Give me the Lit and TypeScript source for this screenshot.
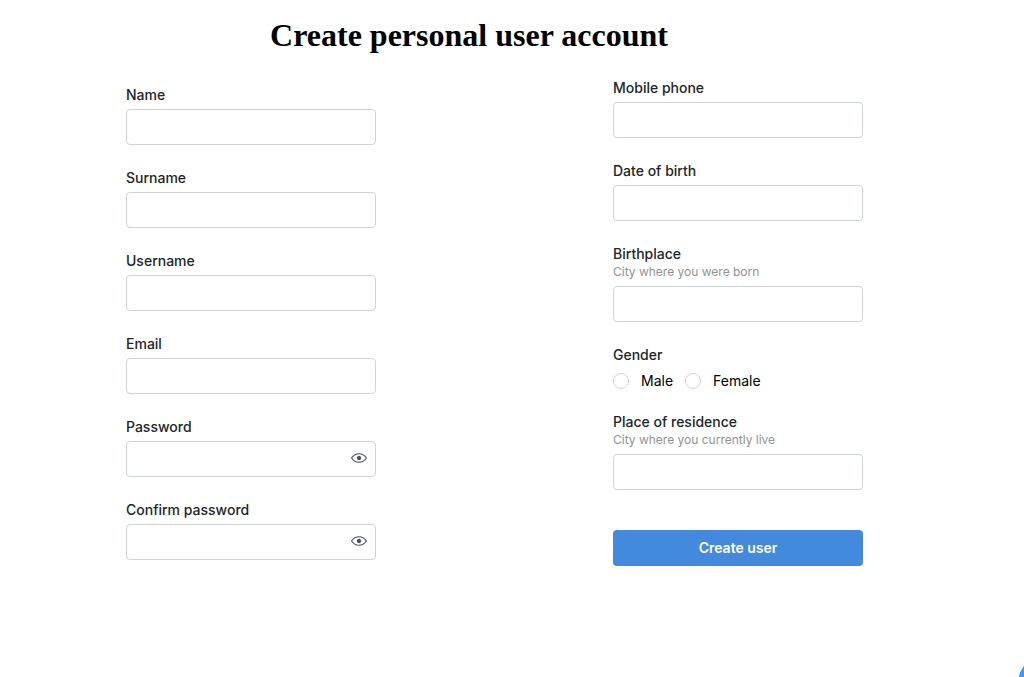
import { LitElement, html, css, svg, nothing } from "lit";
import { customElement, property, state } from "lit/decorators.js";

const eye = svg`<svg viewBox="0 0 15 15" width="16" height="16" aria-hidden="true">
  <path fill="currentColor" fill-rule="evenodd" clip-rule="evenodd" d="M7.5 11C4.8 11 2.54 9.62 1.1 7.5C2.54 5.38 4.8 4 7.5 4C10.2 4 12.46 5.38 13.9 7.5C12.46 9.62 10.2 11 7.5 11ZM7.5 3C4.31 3 1.65 4.71 .08 7.24C-.02 7.4-.02 7.6 .08 7.76C1.65 10.29 4.31 12 7.5 12C10.69 12 13.35 10.29 14.92 7.76C15.02 7.6 15.02 7.4 14.92 7.24C13.35 4.71 10.69 3 7.5 3ZM7.5 9.5C8.6 9.5 9.5 8.6 9.5 7.5C9.5 6.4 8.6 5.5 7.5 5.5C6.4 5.5 5.5 6.4 5.5 7.5C5.5 8.6 6.4 9.5 7.5 9.5Z"/>
</svg>`;

@customElement("form-field")
class FormField extends LitElement {
  @property() label = "";
  @property() name = "";
  @property() type = "text";
  @property() hint = "";
  @state() private revealed = false;

  static styles = css`
    :host { display: block; }
    .label { display: block; font-size: 14px; line-height: 20px; font-weight: 500; color: #212529; }
    .hint { margin: 0 0 6px; font-size: 12px; line-height: 16px; color: #909296; }
    .box {
      display: flex;
      align-items: center;
      box-sizing: border-box;
      height: 36px;
      margin-top: 4px;
      border: 1px solid #ced4da;
      border-radius: 4px;
      background: #fff;
    }
    .box:focus-within { border-color: #228be6; }
    .input {
      flex: 1;
      min-width: 0;
      align-self: stretch;
      padding: 0 12px;
      border: 0;
      outline: 0;
      background: none;
      font: inherit;
      font-size: 14px;
    }
    .toggle {
      display: grid;
      place-items: center;
      width: 26px;
      height: 28px;
      margin-right: 3px;
      padding: 0 0 2px;
      border: 0;
      background: none;
      color: #495057;
      cursor: pointer;
    }
  `;

  render() {
    const secret = this.type === "password";
    return html`
      <label class="label" for="input">${this.label}</label>
      ${this.hint ? html`<p class="hint" id="hint">${this.hint}</p>` : nothing}
      <div class="box">
        <input class="input" id="input" name=${this.name}
          type=${secret && this.revealed ? "text" : this.type}
          aria-describedby=${this.hint ? "hint" : nothing} />
        ${secret
          ? html`<button class="toggle" type="button" aria-label="Show password"
              @click=${() => (this.revealed = !this.revealed)}>${eye}</button>`
          : nothing}
      </div>
    `;
  }
}

@customElement("app-root")
class AppRoot extends LitElement {
  static styles = css`
    :host {
      display: block;
      min-height: 100vh;
      background: #fff;
      color: #000;
      font-family: Inter, "Liberation Sans", sans-serif;
    }
    .title {
      margin: 0;
      padding: 17px 86px 0 0;
      font: bold 32px/37px "Liberation Serif", serif;
      text-align: center;
    }
    .form {
      display: flex;
      flex-wrap: wrap;
      justify-content: space-between;
      padding: 24px 161px 40px 126px;
    }
    .column { display: flex; flex-direction: column; gap: 23px; width: 250px; }
    .first { padding-top: 7px; }
    .gender { margin: 0; padding: 0; border: 0; }
    .legend { padding: 0; font-size: 14px; line-height: 20px; font-weight: 500; color: #212529; }
    .options { display: flex; gap: 12px; margin-top: 8px; }
    .option { display: flex; align-items: center; gap: 12px; font-size: 14px; line-height: 16px; }
    .radio {
      appearance: none;
      width: 16px;
      height: 16px;
      margin: 0;
      border: 1px solid #ced4da;
      border-radius: 50%;
      background: #fff;
    }
    .radio:checked { border: 5px solid #228be6; }
    .submit {
      height: 36px;
      margin-top: 17px;
      border: 0;
      border-radius: 4px;
      background: #438ade;
      color: #fff;
      font: 600 14px/20px Inter, "Liberation Sans", sans-serif;
      cursor: pointer;
    }
    .bubble {
      position: fixed;
      right: -50px;
      bottom: -34px;
      width: 56px;
      height: 56px;
      padding: 0;
      border: 0;
      border-radius: 50%;
      background: #3b99fc;
    }
  `;

  render() {
    return html`
      <h1 class="title">Create personal user account</h1>
      <form class="form" @submit=${(e: Event) => e.preventDefault()}>
        <div class="column first">
          <form-field label="Name" name="name"></form-field>
          <form-field label="Surname" name="surname"></form-field>
          <form-field label="Username" name="username"></form-field>
          <form-field label="Email" name="email" type="email"></form-field>
          <form-field label="Password" name="password" type="password"></form-field>
          <form-field label="Confirm password" name="confirm" type="password"></form-field>
        </div>
        <div class="column">
          <form-field label="Mobile phone" name="phone" type="tel"></form-field>
          <form-field label="Date of birth" name="birthdate"></form-field>
          <form-field label="Birthplace" name="birthplace" hint="City where you were born"></form-field>
          <fieldset class="gender">
            <legend class="legend">Gender</legend>
            <div class="options">
              ${["Male", "Female"].map(
                (g) => html`<label class="option"><input class="radio" type="radio" name="gender" value=${g} />${g}</label>`
              )}
            </div>
          </fieldset>
          <form-field label="Place of residence" name="residence" hint="City where you currently live"></form-field>
          <button class="submit" type="submit">Create user</button>
        </div>
      </form>
      <button class="bubble" type="button" aria-label="Chat"></button>
    `;
  }
}
